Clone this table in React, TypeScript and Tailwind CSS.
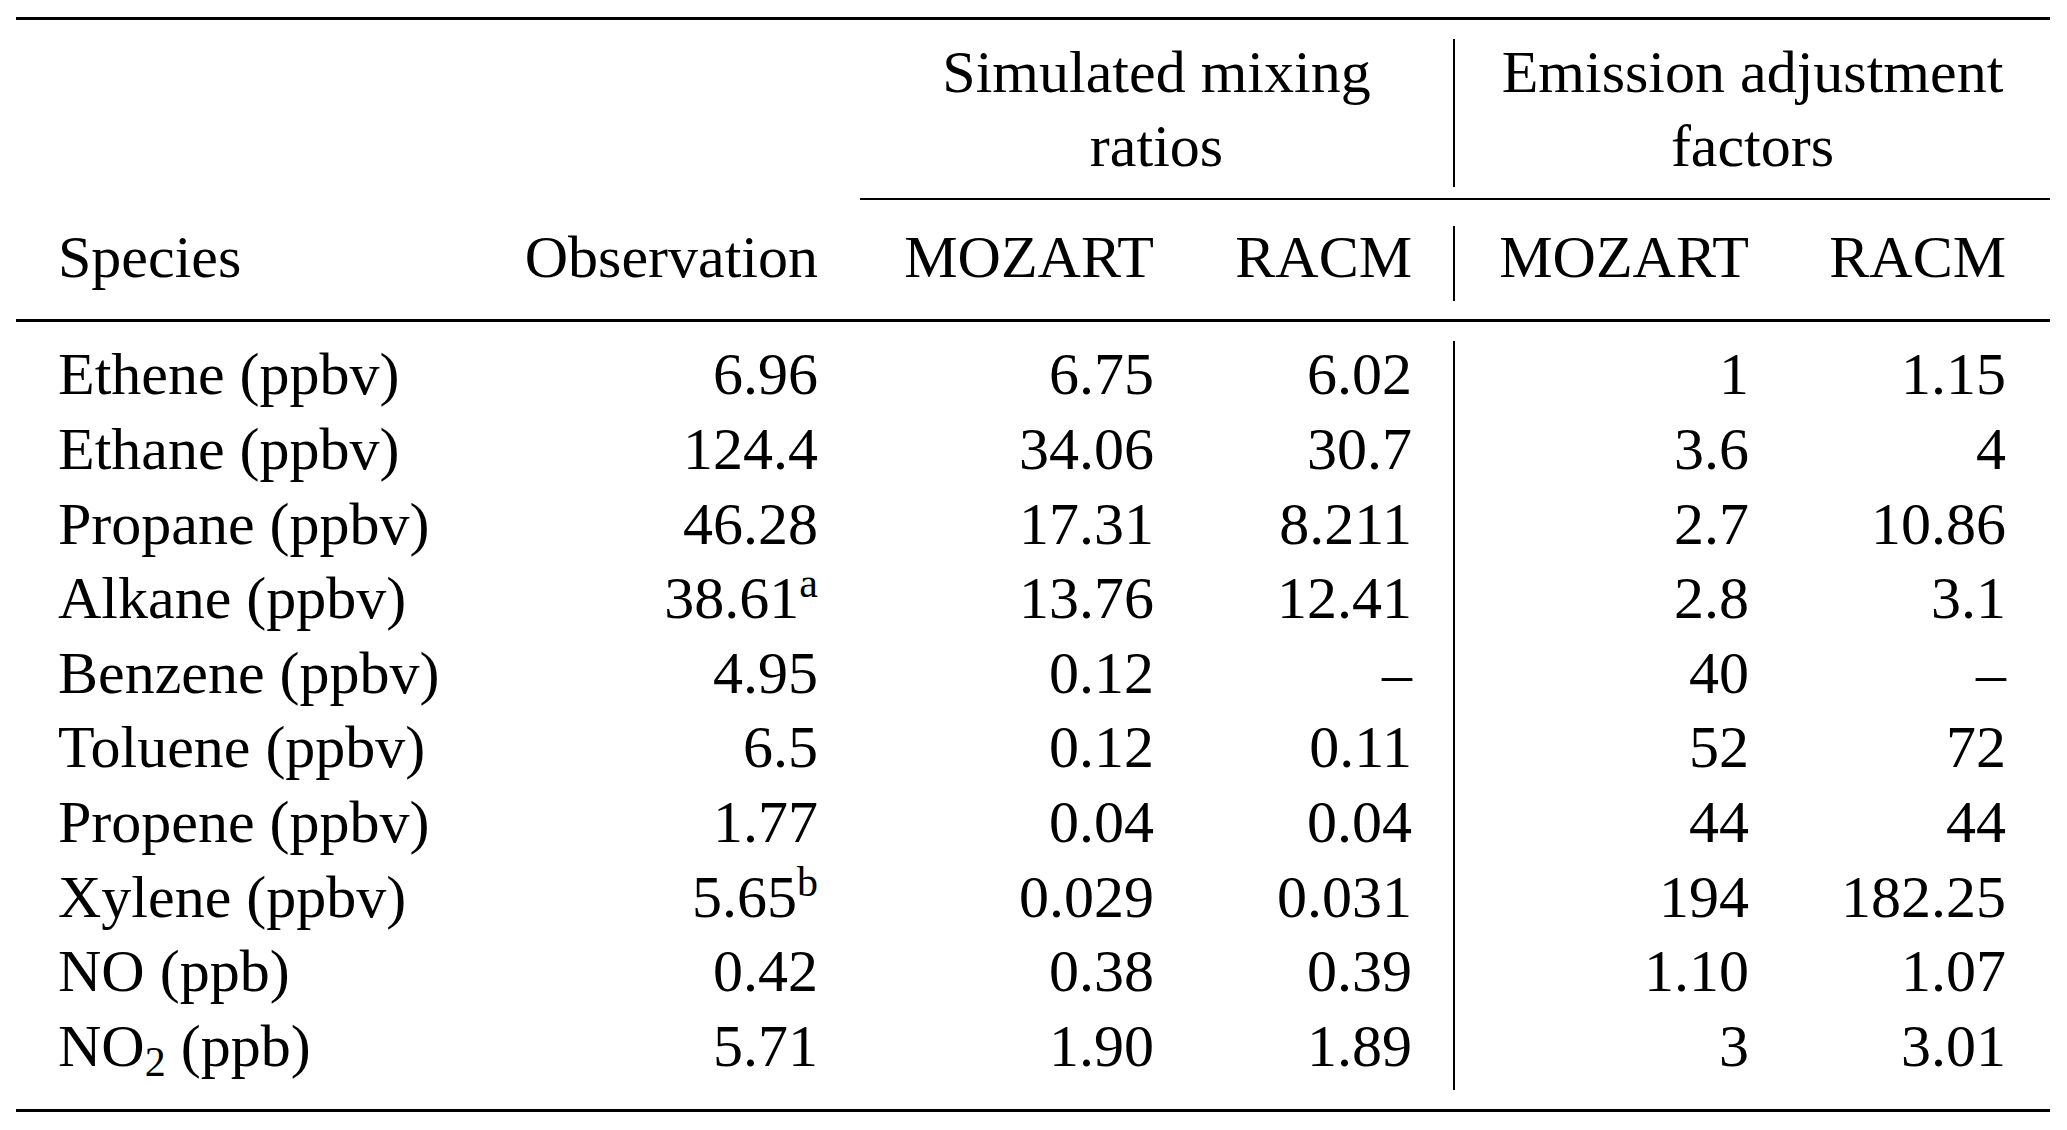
import { Fragment, type ReactNode } from "react";

interface Row {
  species: ReactNode;
  obs: ReactNode;
  simMozart: string;
  simRacm: string;
  emMozart: string;
  emRacm: string;
}

const ROWS: Row[] = [
  { species: "Ethene (ppbv)", obs: "6.96", simMozart: "6.75", simRacm: "6.02", emMozart: "1", emRacm: "1.15" },
  { species: "Ethane (ppbv)", obs: "124.4", simMozart: "34.06", simRacm: "30.7", emMozart: "3.6", emRacm: "4" },
  { species: "Propane (ppbv)", obs: "46.28", simMozart: "17.31", simRacm: "8.211", emMozart: "2.7", emRacm: "10.86" },
  {
    species: "Alkane (ppbv)",
    obs: (
      <>
        38.61<sup className="text-[42px]">a</sup>
      </>
    ),
    simMozart: "13.76",
    simRacm: "12.41",
    emMozart: "2.8",
    emRacm: "3.1",
  },
  { species: "Benzene (ppbv)", obs: "4.95", simMozart: "0.12", simRacm: "–", emMozart: "40", emRacm: "–" },
  { species: "Toluene (ppbv)", obs: "6.5", simMozart: "0.12", simRacm: "0.11", emMozart: "52", emRacm: "72" },
  { species: "Propene (ppbv)", obs: "1.77", simMozart: "0.04", simRacm: "0.04", emMozart: "44", emRacm: "44" },
  {
    species: "Xylene (ppbv)",
    obs: (
      <>
        5.65<sup className="text-[42px]">b</sup>
      </>
    ),
    simMozart: "0.029",
    simRacm: "0.031",
    emMozart: "194",
    emRacm: "182.25",
  },
  { species: "NO (ppb)", obs: "0.42", simMozart: "0.38", simRacm: "0.39", emMozart: "1.10", emRacm: "1.07" },
  {
    species: (
      <>
        NO<sub className="text-[42px]">2</sub> (ppb)
      </>
    ),
    obs: "5.71",
    simMozart: "1.90",
    simRacm: "1.89",
    emMozart: "3",
    emRacm: "3.01",
  },
];

// column grid shared by every row: species | obs | sim MOZART | sim RACM | rule | em MOZART | em RACM
const COLS = "grid grid-cols-[469px_375px_335px_258px_2px_336px_259px]";

export default function App() {
  return (
    <div className="w-[2067px] h-[1130px] bg-white text-black text-[60px] font-['Liberation_Serif',serif] pt-[17px]">
      <div className="ml-[16px] w-[2034px]">
        {/* toprule */}
        <div className="h-[3px] bg-black" />

        {/* group headers */}
        <div className={`${COLS} h-[178px]`}>
          <div className="col-start-3 col-span-2 text-center leading-[74px] pt-[14.7px]">
            Simulated mixing
            <br />
            ratios
          </div>
          <div className="col-start-5 bg-black mt-[19px] mb-[11px]" />
          <div className="col-start-6 col-span-2 text-center leading-[74px] pt-[14.7px]">
            Emission adjustment
            <br />
            factors
          </div>
        </div>

        {/* cmidrule */}
        <div className={COLS}>
          <div className="col-start-3 col-span-5 h-[2px] bg-black" />
        </div>

        {/* column headers */}
        <div className={`${COLS} h-[119px] leading-[74.6px]`}>
          <div className="pl-[42px] pt-[20.4px]">Species</div>
          <div className="text-right pr-[42px] pt-[20.4px]">Observation</div>
          <div className="text-right pr-[41px] pt-[20.4px]">MOZART</div>
          <div className="text-right pr-[41px] pt-[20.4px]">RACM</div>
          <div className="bg-black mt-[26px] mb-[18px]" />
          <div className="text-right pr-[42px] pt-[20.4px]">MOZART</div>
          <div className="text-right pr-[44px] pt-[20.4px]">RACM</div>
        </div>

        {/* midrule */}
        <div className="h-[3px] bg-black" />

        {/* body */}
        <div className={`${COLS} auto-rows-[74.6px] leading-[74.6px] h-[787px] pt-[15.4px]`}>
          <div className="col-start-5 row-start-1 row-span-10 bg-black mt-[3.6px] -mb-[6.6px]" />
          {ROWS.map((r, i) => (
            <Fragment key={i}>
              <div className="col-start-1 pl-[42px] whitespace-nowrap">{r.species}</div>
              <div className="col-start-2 text-right pr-[42px]">{r.obs}</div>
              <div className="col-start-3 text-right pr-[41px]">{r.simMozart}</div>
              <div className="col-start-4 text-right pr-[41px]">{r.simRacm}</div>
              <div className="col-start-6 text-right pr-[42px]">{r.emMozart}</div>
              <div className="col-start-7 text-right pr-[44px]">{r.emRacm}</div>
            </Fragment>
          ))}
        </div>

        {/* bottomrule */}
        <div className="h-[3px] bg-black" />
      </div>
    </div>
  );
}
